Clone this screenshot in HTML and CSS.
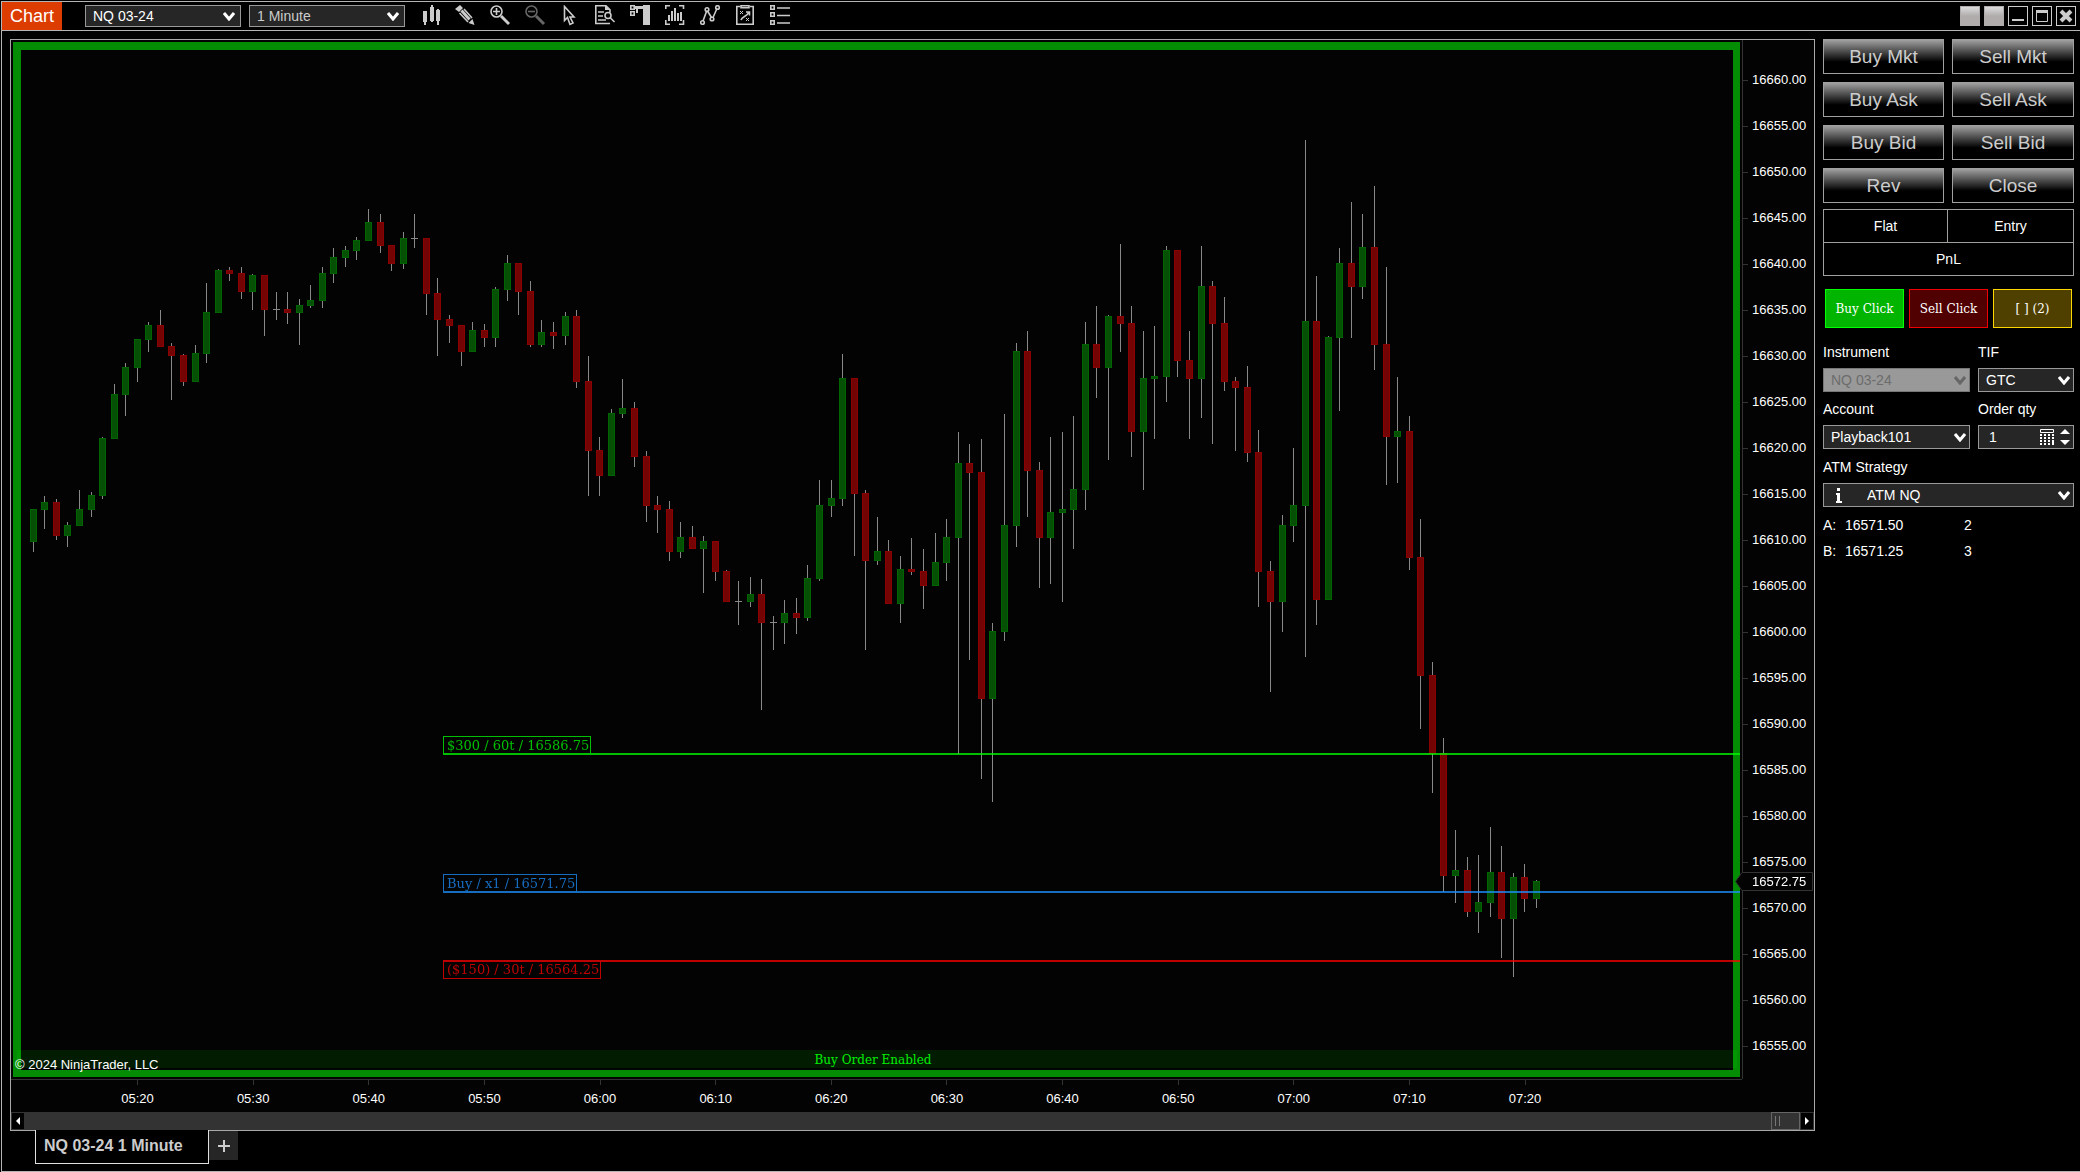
FILE: index.html
```html
<!DOCTYPE html>
<html lang="en">
<head>
<meta charset="utf-8">
<title>Chart - NQ 03-24 1 Minute</title>
<meta name="viewport" content="width=device-width, initial-scale=1">
<link rel="stylesheet" href="styles.css">
</head>
<body>
<div class="window">
  <header class="titlebar">
    <h1 class="title">Chart</h1>
    <div class="selectors">
      <div class="select">
        <select aria-label="Chart instrument"><option>NQ 03-24</option></select>
        <svg class="chevron" viewBox="0 0 12 9"><path d="M1 1l5 6 5-6"/></svg>
      </div>
      <div class="select select-soft">
        <select aria-label="Interval"><option>1 Minute</option></select>
        <svg class="chevron" viewBox="0 0 12 9"><path d="M1 1l5 6 5-6"/></svg>
      </div>
    </div>
    <div class="tools">
      <button type="button" class="tool" aria-label="Chart style"><svg viewBox="0 0 21 22"><path class="solid" d="M3 6h4v11H3zM10 2h4v14h-4zM16 5h4v11h-4zM4 16h2v4H4zM11 0h2v3h-2zM11 15h2v2h-2zM17 4h2v2h-2zM17 15h2v5h-2z"/></svg></button>
      <button type="button" class="tool" aria-label="Drawing tools"><svg viewBox="0 0 21 22"><path class="solid" d="M5 0l3 3-4 4-4-3zM19.500 20l-6-2 4-4z"/><path d="M9 4l8 9M4.500 8l8.500 9"/><path class="bold" d="M6.500 5.500l8 9"/></svg></button>
      <button type="button" class="tool" aria-label="Zoom in"><svg viewBox="0 0 21 22"><circle cx="6.500" cy="6.500" r="5.500"/><path d="M3 6.500h7M6.500 3v7"/><path class="bold" d="M11 11l8 8"/></svg></button>
      <button type="button" class="tool tool-off" aria-label="Zoom out" disabled><svg viewBox="0 0 21 22"><circle cx="6.500" cy="6.500" r="5.500"/><path d="M3 6.500h7"/><path class="bold" d="M11 11l8 8"/></svg></button>
      <button type="button" class="tool" aria-label="Cursor"><svg viewBox="0 0 21 22"><path d="M4.500 1.500v14l3-3 2.500 7 3-1.500-3-6h4z"/></svg></button>
      <button type="button" class="tool" aria-label="Data box"><svg viewBox="0 0 21 22"><path d="M15 18.500H.8V.8H11l4 4v3M3 7h6M3 11h5M3 15h8"/><path class="solid" d="M10 0l5 5h-5z"/><circle cx="13" cy="10.500" r="3"/><path d="M15.500 13l4 4"/></svg></button>
      <button type="button" class="tool" aria-label="Chart trader"><svg viewBox="0 0 21 22"><path class="solid" d="M13 0h7v20h-7zM5 1h8v3H5zM6 4h2v4H6z"/><path d="M.8.800h3.400v3.400H.800zM.8 6.800h3.400v3.400H.800z"/></svg></button>
      <button type="button" class="tool" aria-label="Indicators"><svg viewBox="0 0 21 22"><path d="M.8 4V.800H5M14 .800h4.500V4M.8 15v4.200H5M14 19.200h4.500V15"/><path class="solid" d="M3 10h2v6H3zM6 6h2v10H6zM9 3h2v13H9zM12 8h2v8h-2zM15 7h2v9h-2z"/></svg></button>
      <button type="button" class="tool" aria-label="Strategies"><svg viewBox="0 0 21 22"><path d="M3 16L6.500 6.500M7.500 6l4 6.500M13 12.500l4-9"/><circle cx="2.500" cy="17.500" r="1.800"/><circle cx="7" cy="4.500" r="1.800"/><circle cx="12" cy="14" r="1.800"/><circle cx="17.500" cy="2.500" r="1.800"/></svg></button>
      <button type="button" class="tool" aria-label="Strategy analyzer"><svg viewBox="0 0 21 22"><path d="M5 1.500H1.800v17.700h16.400V1.500H15M6 .800h8v2H6zM6 15c1-4 6-3 8-8M11 7h3.500v3.500"/><path class="thin" d="M5 6l3 3M8 6L5 9M11 13l3 3M14 13l-3 3"/></svg></button>
      <button type="button" class="tool" aria-label="Properties"><svg viewBox="0 0 21 22"><path d="M.8.800h3.400v3.400H.800zM.8 7.800h3.400v3.400H.800zM.8 15.800h3.400v3.400H.800zM7 3h13M7 10.500h13M7 18h13"/></svg></button>
    </div>
    <div class="window-buttons">
      <button type="button" class="win-btn win-link" aria-label="Instrument link"></button>
      <button type="button" class="win-btn win-link" aria-label="Interval link"></button>
      <button type="button" class="win-btn" aria-label="Minimize"><svg viewBox="0 0 18 18"><path d="M3 13h12"/></svg></button>
      <button type="button" class="win-btn" aria-label="Maximize"><svg viewBox="0 0 18 18"><path class="frame" d="M3.500 4v10.500h11V4"/><path class="cap" d="M3 4.500h12"/></svg></button>
      <button type="button" class="win-btn" aria-label="Close window"><svg viewBox="0 0 18 18"><path class="cross" d="M4 4l10 10M14 4L4 14"/></svg></button>
    </div>
  </header>

  <main class="workspace">
    <section class="chart-column">
      <div class="chart">
        <div class="plot">
          <svg class="candles" id="candles" viewBox="11 40 1731 1039" preserveAspectRatio="none" role="img" aria-label="NQ 03-24 one minute candles"></svg>
          <div class="plot-frame"></div>
          <div class="level level-target" style="--price:16586.75"><span class="level-tag">$300 / 60t / 16586.75</span></div>
          <div class="level level-entry" style="--price:16571.75"><span class="level-tag">Buy / x1 / 16571.75</span></div>
          <div class="level level-stop" style="--price:16564.25"><span class="level-tag">($150) / 30t / 16564.25</span></div>
          <div class="plot-status">Buy Order Enabled</div>
          <div class="copyright">© 2024 NinjaTrader, LLC</div>
        </div>
        <div class="price-axis">
          <span>16660.00</span><span>16655.00</span><span>16650.00</span><span>16645.00</span><span>16640.00</span><span>16635.00</span><span>16630.00</span><span>16625.00</span><span>16620.00</span><span>16615.00</span><span>16610.00</span><span>16605.00</span><span>16600.00</span><span>16595.00</span><span>16590.00</span><span>16585.00</span><span>16580.00</span><span>16575.00</span><span>16570.00</span><span>16565.00</span><span>16560.00</span><span>16555.00</span>
          <div class="last-price" style="--price:16572.75">
            <svg viewBox="0 0 78 20"><path d="M.5 9.500L7 .500h70.500v18H7z"/></svg>
            <b>16572.75</b>
          </div>
        </div>
        <div class="time-axis">
          <span>05:20</span><span>05:30</span><span>05:40</span><span>05:50</span><span>06:00</span><span>06:10</span><span>06:20</span><span>06:30</span><span>06:40</span><span>06:50</span><span>07:00</span><span>07:10</span><span>07:20</span>
        </div>
        <div class="scrollbar">
          <button type="button" class="scroll-btn" aria-label="Scroll left"><svg viewBox="0 0 12 16"><path d="M8 4v8L4 8z"/></svg></button>
          <div class="scroll-track"><div class="scroll-thumb"></div></div>
          <button type="button" class="scroll-btn" aria-label="Scroll right"><svg viewBox="0 0 12 16"><path d="M4 4v8l4-4z"/></svg></button>
        </div>
      </div>
      <nav class="tabs">
        <button type="button" class="tab">NQ 03-24 1 Minute</button>
        <button type="button" class="tab-add" aria-label="Add tab"><svg viewBox="0 0 14 14"><path d="M7 1v12M1 7h12"/></svg></button>
      </nav>
    </section>

    <aside class="trader">
      <div class="orders">
        <button type="button" class="order">Buy Mkt</button>
        <button type="button" class="order">Sell Mkt</button>
        <button type="button" class="order">Buy Ask</button>
        <button type="button" class="order">Sell Ask</button>
        <button type="button" class="order">Buy Bid</button>
        <button type="button" class="order">Sell Bid</button>
        <button type="button" class="order">Rev</button>
        <button type="button" class="order">Close</button>
      </div>
      <div class="position">
        <div>Flat</div>
        <div>Entry</div>
        <div class="pnl">PnL</div>
      </div>
      <div class="clicks">
        <button type="button" class="click click-buy">Buy Click</button>
        <button type="button" class="click click-sell">Sell Click</button>
        <button type="button" class="click click-qty">[ ] (2)</button>
      </div>
      <form class="fields">
        <div class="field">
          <label for="instrument">Instrument</label>
          <div class="select select-off">
            <select id="instrument" disabled><option>NQ 03-24</option></select>
            <svg class="chevron" viewBox="0 0 12 9"><path d="M1 1l5 6 5-6"/></svg>
          </div>
        </div>
        <div class="field">
          <label for="tif">TIF</label>
          <div class="select">
            <select id="tif"><option>GTC</option></select>
            <svg class="chevron" viewBox="0 0 12 9"><path d="M1 1l5 6 5-6"/></svg>
          </div>
        </div>
        <div class="field">
          <label for="account">Account</label>
          <div class="select">
            <select id="account"><option>Playback101</option></select>
            <svg class="chevron" viewBox="0 0 12 9"><path d="M1 1l5 6 5-6"/></svg>
          </div>
        </div>
        <div class="field">
          <label for="qty">Order qty</label>
          <div class="quantity">
            <input id="qty" type="text" inputmode="numeric" value="1">
            <svg class="calculator" viewBox="0 0 14 16"><path class="screen" d="M.5.500h13v3H.500z"/><path d="M0 5h2v2H0zM4 5h2v2H4zM8 5h2v2H8zM12 5h2v2h-2zM0 8h2v2H0zM4 8h2v2H4zM8 8h2v2H8zM12 8h2v2h-2zM0 11h2v2H0zM4 11h2v2H4zM8 11h2v2H8zM12 11h2v5h-2zM0 14h2v2H0zM4 14h2v2H4zM8 14h2v2H8z"/></svg>
            <div class="spin">
              <button type="button" aria-label="Increase"><svg viewBox="0 0 10 5"><path d="M5 0l5 5H0z"/></svg></button>
              <button type="button" aria-label="Decrease"><svg viewBox="0 0 10 5"><path d="M5 5l5-5H0z"/></svg></button>
            </div>
          </div>
        </div>
        <div class="field field-wide">
          <label for="atm">ATM Strategy</label>
          <div class="select select-info">
            <select id="atm"><option>ATM NQ</option></select>
            <svg class="info" viewBox="0 0 6 15"><path d="M1 0h3v3H1zM0 5h4v8h2v2H0v-2h1V7H0z"/></svg>
            <svg class="chevron" viewBox="0 0 12 9"><path d="M1 1l5 6 5-6"/></svg>
          </div>
        </div>
      </form>
      <table class="quotes">
        <tbody>
          <tr><th scope="row">A:</th><td>16571.50</td><td>2</td></tr>
          <tr><th scope="row">B:</th><td>16571.25</td><td>3</td></tr>
        </tbody>
      </table>
    </aside>
  </main>
</div>
<script src="chart.js"></script>
</body>
</html>
```
FILE: styles.css
```css
* { box-sizing: border-box; }

body {
  margin: 0;
  background: #000;
  color: #fff;
  font: 14px/20px "Liberation Sans", Arial, sans-serif;
}

button, select, input { font: inherit; color: inherit; margin: 0; border-radius: 0; }
button { padding: 0; border: 0; background: none; }
svg { display: block; fill: none; }

.window {
  display: flex;
  flex-direction: column;
  min-height: calc(100vh - 1px);
  margin: 1px 0 0 1px;
  border: 1px solid #b4b4b4;
  border-right: 0;
}

/* Title bar */
.titlebar {
  display: flex;
  align-items: center;
  height: 29px;
  border-bottom: 1px solid #b4b4b4;
}
.title {
  align-self: stretch;
  width: 60px;
  margin: 0;
  background: #dc3c00;
  font-size: 18px;
  font-weight: 400;
  line-height: 28px;
  text-align: center;
}
.selectors { display: flex; gap: 8px; margin: 0 8px 0 23px; }
.selectors .select { width: 156px; height: 22px; }

.select { display: grid; grid-template-columns: minmax(0, 1fr); height: 24px; }
.select select {
  grid-area: 1 / 1;
  width: 100%;
  height: 100%;
  padding: 0 24px 0 7px;
  border: 1px solid #999;
  background: #262626;
  appearance: none;
}
.chevron {
  grid-area: 1 / 1;
  place-self: center end;
  width: 12px;
  height: 9px;
  margin-right: 6px;
  stroke: #fff;
  stroke-width: 3;
  pointer-events: none;
}
.trader .chevron { margin-right: 4px; }
.select-soft select { color: #ccc; }
.select-off select { background: #999; border-color: #777; color: #6c6c6c; opacity: 1; }
.select-off .chevron { stroke: #666; }
.select-info select { padding-left: 43px; }
.info {
  grid-area: 1 / 1;
  place-self: center start;
  width: 6px;
  height: 15px;
  margin-left: 13px;
  fill: #fff;
  pointer-events: none;
}

.tools { display: flex; }
.tool { width: 35px; display: grid; place-items: center; }
.tool svg { width: 21px; height: 22px; stroke: #ccc; stroke-width: 1.6; }
.tool .solid { fill: #ccc; stroke: none; }
.tool .bold { stroke-width: 3; }
.tool .thin { stroke-width: 1; }
.tool-off svg { stroke: #666; }

.window-buttons { display: flex; gap: 4px; margin: 0 4px 0 auto; }
.win-btn { width: 20px; height: 20px; border: 1px solid #ccc; }
.win-btn svg { width: 18px; height: 18px; stroke: #ccc; stroke-width: 2; }
.win-btn .frame { stroke-width: 1; }
.win-btn .cap { stroke-width: 3; }
.win-btn .cross { stroke-width: 4; }
.win-link { border-color: #b0acac; background: linear-gradient(#dcdcdc, #b0acac 50%); }

/* Workspace */
.workspace {
  flex: 1;
  display: flex;
  gap: 8px;
  padding: 8px 6px 7px 8px;
}
.chart-column { flex: 1; min-width: 0; display: flex; flex-direction: column; }

.chart {
  flex: 1;
  display: grid;
  grid-template-columns: 1fr 72px;
  grid-template-rows: 1fr 33px 18px;
  border: 1px solid #a8a8a8;
  background: #030303;
}

.plot { position: relative; min-height: 400px; }
.candles { position: absolute; width: 100%; height: 100%; shape-rendering: crispEdges; }
.wick { fill: #888; }
.up { fill: #055005; stroke: #006400; }
.down { fill: #740404; stroke: #8b0000; }

.plot-frame {
  position: absolute;
  inset: 2px;
  border: solid #058c05;
  border-width: 8px 7px 7px 8px;
}

/* One point of price is 0.8849% of the plot height, counted from the top edge */
.level, .last-price { top: calc((16664.4 - var(--price)) * 0.8849%); }
.level {
  position: absolute;
  left: 432px;
  right: 2px;
  height: 2px;
  margin-top: -1px;
  background: var(--tone);
  color: var(--tone);
  opacity: 0.75;
}
.level-target { --tone: #0f0; }
.level-entry { --tone: #1e90ff; }
.level-stop { --tone: #f00; }
.level-tag {
  position: absolute;
  left: 0;
  bottom: 0;
  padding: 0 1px 0 3px;
  border: 1px solid;
  font: 13px/17px "DejaVu Serif", serif;
  white-space: nowrap;
}
.level-stop .level-tag { top: 0; bottom: auto; }

.plot-status {
  position: absolute;
  left: 6px;
  right: 5px;
  bottom: 11px;
  height: 18px;
  padding-right: 8px;
  background: rgba(0, 255, 0, 0.1);
  color: #00f000;
  font: 12px/20px "DejaVu Serif", serif;
  text-align: center;
}
.copyright { position: absolute; left: 4px; bottom: 4px; font-size: 13px; }

.price-axis {
  position: relative;
  display: flex;
  flex-direction: column;
  border-left: 1px solid #333;
  font-size: 13px;
}
.price-axis::before { content: ""; flex: 35 0 0; }
.price-axis::after { content: ""; flex: 20 0 0; }
.price-axis > span { flex: 92 0 0; min-height: 0; display: flex; align-items: center; gap: 4px; }
.price-axis > span::before { content: ""; width: 5px; height: 1px; background: #333; }

.last-price { position: absolute; left: -8px; width: 78px; height: 20px; margin-top: -11px; }
.last-price svg { position: absolute; width: 78px; height: 20px; fill: #030303; stroke: #333; }
.last-price b { position: absolute; left: 17px; top: 0; font-weight: 400; }

.time-axis { display: flex; border-top: 1px solid #333; font-size: 13px; }
.time-axis::before { content: ""; flex: 687 0 0; }
.time-axis::after { content: ""; flex: 1591 0 0; }
.time-axis span { flex: 1156 0 0; display: flex; flex-direction: column; align-items: center; gap: 4px; }
.time-axis span::before { content: ""; width: 1px; height: 5px; background: #333; }

.scrollbar { grid-column: 1 / -1; display: flex; padding: 1px; background: #333; }
.scroll-btn { width: 12px; background: #000; }
.scroll-btn svg { width: 12px; height: 16px; fill: #fff; }
.scroll-track { flex: 1; display: flex; justify-content: flex-end; }
.scroll-thumb {
  width: 29px;
  margin: -1px 1px -1px 0;
  border: 1px solid #666;
  background: linear-gradient(#777, #777) 3px 50% / 1px 10px no-repeat, linear-gradient(#777, #777) 7px 50% / 1px 10px no-repeat;
}

.tabs { display: flex; align-items: flex-start; margin: -1px 0 0 25px; }
.tab {
  width: 174px;
  height: 34px;
  padding: 0 0 2px 8px;
  border: 1px solid #e0e0e0;
  border-top: 0;
  background: #000;
  color: #ccc;
  font-size: 16px;
  font-weight: 700;
  text-align: left;
}
.tab-add { width: 29px; height: 29px; margin-top: 1px; background: #262626; display: grid; place-items: center; }
.tab-add svg { width: 14px; height: 14px; stroke: #ccc; stroke-width: 2; }

/* Order entry */
.trader { width: 251px; }
.orders { display: grid; grid-template-columns: 121fr 122fr; gap: 8px; }
.order {
  height: 35px;
  border: 1px solid #a0a0a0;
  background: linear-gradient(#a0a0a0, #000 66%);
  color: #ccc;
  font-size: 19px;
}

.position {
  display: grid;
  grid-template-columns: 123fr 125fr;
  gap: 1px;
  margin-top: 6px;
  padding: 1px;
  background: #a0a0a0;
}
.position div { height: 32px; background: #000; line-height: 33px; text-align: center; }
.position .pnl { grid-column: 1 / -1; }

.clicks { display: grid; grid-template-columns: repeat(3, 1fr); gap: 5px; margin: 13px 2px 0; }
.click { height: 39px; border: 1px solid; font: 12px/20px "DejaVu Serif", serif; }
.click-buy { background: #00b400; border-color: #0f0; }
.click-sell { background: #500000; border-color: #f00000; }
.click-qty { background: #504000; border-color: #ffd700; }

.fields { display: grid; grid-template-columns: 147px minmax(0, 1fr); gap: 8px; margin-top: 15px; }
.field-wide { grid-column: 1 / -1; margin-top: 1px; }
.field label { display: block; height: 25px; line-height: 19px; }

.quantity {
  display: flex;
  align-items: center;
  gap: 6px;
  height: 24px;
  padding-right: 3px;
  border: 1px solid #999;
  background: #262626;
}
.quantity input { flex: 1; width: 0; min-width: 0; height: 100%; padding: 0 0 0 10px; border: 0; background: none; }
.calculator { flex: none; width: 14px; height: 16px; fill: #fff; }
.calculator .screen { fill: none; stroke: #fff; }
.spin { display: grid; gap: 6px; }
.spin button { width: 10px; height: 5px; }
.spin svg { width: 10px; height: 5px; fill: #fff; }

.quotes { width: 100%; margin-top: 5px; border-collapse: collapse; table-layout: fixed; }
.quotes th { width: 22px; padding: 0; font-weight: 400; text-align: left; }
.quotes td { height: 26px; padding: 0; }
.quotes td:nth-child(2) { width: 119px; }
```
FILE: chart.js
```js
// One entry per minute from 05:11: high, body top, body bottom, low in plot
// units, and u (up), d (down) or n (unchanged).
const bars = `
509 509 542 552 u|496 502 510 529 u|499 502 536 540 d|522 525 536 547 u|490 509 526 526 u|492 495 510 517 u
437 438 496 499 u|384 394 439 439 u|363 367 395 416 u|339 339 368 382 u|322 325 340 352 u|310 325 347 347 d
343 346 356 400 d|354 355 382 386 d|345 353 382 382 u|283 312 354 363 u|269 270 313 313 u|267 270 274 281 d
267 273 292 299 d|274 275 292 310 u|275 275 310 336 d|292 309 310 320 n|292 309 313 324 d|299 305 313 345 u
285 300 306 308 u|267 273 301 308 u|248 257 274 283 u|246 250 258 267 u|237 240 251 260 u|209 222 241 241 u
214 222 246 253 d|245 245 264 271 d|232 238 264 269 u|214 238 239 248 n|238 238 294 315 d|278 293 320 356 d
315 319 326 343 d|325 325 352 366 d|322 330 352 352 u|324 330 338 347 d|287 289 338 347 u|255 263 290 301 u
263 263 292 315 d|281 291 345 347 d|320 332 345 347 u|322 332 336 349 d|312 316 336 345 u|310 316 382 388 d
356 381 451 496 d|437 450 476 496 d|409 413 476 476 u|379 408 414 418 u|402 408 457 467 d|451 456 506 522 d
496 505 510 533 d|501 509 552 561 d|522 537 552 558 u|526 537 549 549 d|536 541 549 593 u|541 541 572 581 d
570 571 602 602 d|581 601 602 625 n|577 594 602 607 u|579 594 623 710 d|616 622 623 650 n|600 613 623 644 u
598 613 618 634 d|565 578 618 621 u|480 505 579 581 u|480 498 506 517 u|354 378 499 506 u|378 378 494 556 d
490 493 561 650 d|517 551 561 565 u|540 551 604 604 d|556 569 604 623 u|538 569 572 575 d|549 571 586 609 d
533 562 586 586 u|519 537 563 581 u|432 463 538 754 u|444 463 473 660 d|439 472 699 779 d|623 631 699 802 u
414 525 632 641 u|343 351 526 547 u|331 351 471 517 d|462 470 538 588 d|437 512 538 584 u|432 509 513 602 u
416 489 510 549 u|322 344 490 510 u|306 344 368 398 d|315 316 368 460 u|244 316 324 352 d|306 323 432 457 d
331 378 432 490 u|326 376 379 439 u|246 250 377 402 u|250 250 361 377 d|331 360 379 439 d|246 286 379 418 u
281 286 324 444 d|297 323 382 391 d|377 381 388 451 d|366 387 453 462 d|430 452 572 607 d|561 571 602 692 d
515 525 602 632 u|448 505 526 542 u|140 321 506 657 u|276 321 600 625 d|336 337 600 600 u|248 263 338 411 u
202 263 287 338 d|214 247 287 299 u|186 247 345 370 d|267 344 437 485 d|377 431 437 483 u|416 431 558 570 d
519 557 676 729 d|662 675 754 793 d|738 753 876 892 d|830 870 876 903 u|857 870 912 917 d|855 902 912 933 u
827 872 903 917 u|846 872 919 958 d|873 877 919 977 u|864 877 899 912 d|880 881 899 908 u`;

const FIRST_X = 33.2;
const STEP = 11.563;
const chart = document.getElementById("candles");

function rect(className, x, y, width, height) {
  const el = document.createElementNS("http://www.w3.org/2000/svg", "rect");
  el.setAttribute("class", className);
  el.setAttribute("x", x);
  el.setAttribute("y", y);
  el.setAttribute("width", width);
  el.setAttribute("height", height);
  chart.appendChild(el);
}

bars.trim().split(/[|\n]/).forEach((bar, i) => {
  const [high, top, bottom, low, kind] = bar.split(" ");
  const x = Math.floor(FIRST_X + STEP * i);
  rect("wick", x, +high, 1, low - high);
  if (kind === "n") {
    rect("wick", x - 3, +top, 7, 1);
  } else {
    rect(kind === "u" ? "up" : "down", x - 2.5, +top + 0.5, 6, bottom - top - 1);
  }
});
```
